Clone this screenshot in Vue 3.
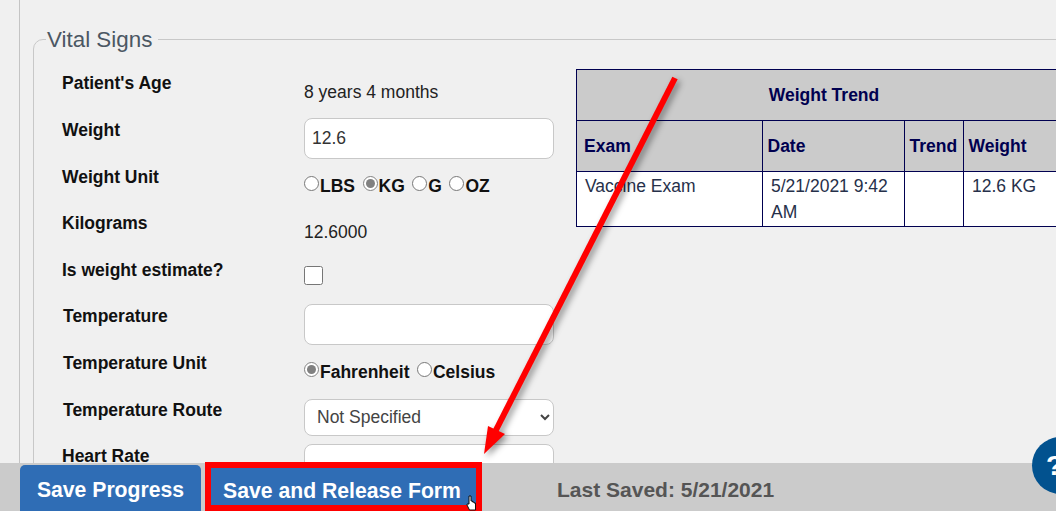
<script setup>
const rows = [
  { label: "Patient's Age", kind: 'text', value: '8 years 4 months' },
  { label: 'Weight', kind: 'input', value: '12.6' },
  { label: 'Weight Unit', kind: 'radio', name: 'unit', options: [['LBS', false], ['KG', true], ['G', false], ['OZ', false]] },
  { label: 'Kilograms', kind: 'text', value: '12.6000' },
  { label: 'Is weight estimate?', kind: 'check' },
  { label: 'Temperature', kind: 'input', value: '', nudge: true },
  { label: 'Temperature Unit', kind: 'radio', name: 'tunit', nudge: true, options: [['Fahrenheit', true], ['Celsius', false]] },
  { label: 'Temperature Route', kind: 'select', value: 'Not Specified', nudge: true },
  { label: 'Heart Rate', kind: 'input', value: '' },
]
</script>

<template>
  <div class="page">
    <main class="content">
      <div class="panel">
        <fieldset class="vitals">
          <legend>Vital Signs</legend>
          <div class="columns">
            <div class="form-grid">
              <div v-for="row in rows" :key="row.label" class="row">
                <label class="row-label" :class="{ nudge: row.nudge }">{{ row.label }}</label>
                <div class="row-value">
                  <span v-if="row.kind === 'text'" class="plain">{{ row.value }}</span>
                  <input v-else-if="row.kind === 'input'" class="field" type="text" :value="row.value" />
                  <div v-else-if="row.kind === 'radio'" class="radios">
                    <label v-for="opt in row.options" :key="opt[0]" class="radio">
                      <input type="radio" :name="row.name" :checked="opt[1]" />{{ opt[0] }}
                    </label>
                  </div>
                  <input v-else-if="row.kind === 'check'" class="check" type="checkbox" />
                  <select v-else class="field picker">
                    <option>{{ row.value }}</option>
                  </select>
                </div>
              </div>
            </div>

            <table class="trend">
              <colgroup>
                <col class="c-exam" />
                <col class="c-date" />
                <col class="c-trend" />
                <col />
              </colgroup>
              <thead>
                <tr class="title"><th colspan="4">Weight Trend</th></tr>
                <tr class="heads">
                  <th class="h-exam">Exam</th>
                  <th>Date</th>
                  <th>Trend</th>
                  <th>Weight</th>
                </tr>
              </thead>
              <tbody>
                <tr>
                  <td>Vaccine Exam</td>
                  <td>5/21/2021 9:42 AM</td>
                  <td></td>
                  <td>12.6 KG</td>
                </tr>
              </tbody>
            </table>
          </div>
        </fieldset>
      </div>
    </main>

    <footer class="bar">
      <button class="save first">Save Progress</button>
      <button class="save release">Save and Release Form</button>
      <span class="saved">Last Saved: 5/21/2021</span>
    </footer>

    <button class="help">?</button>

    <!-- annotation drawn over the screenshot -->
    <svg class="arrow" width="1056" height="511" viewBox="0 0 1056 511">
      <path d="M675 78 L495 432" stroke="#ff0000" stroke-width="6" fill="none" />
      <path d="M484 454 L488 426 L505 434 Z" fill="#ff0000" />
    </svg>

    <svg class="pointer" width="11" height="16" viewBox="0 0 11 16">
      <path d="M3 1 h2 v5 h1.5 v1 h1.5 v1 h1.5 v7 h-6 l-2.5 -5 v-1 h2 z" fill="#fff" stroke="#111" stroke-width="1" />
    </svg>
  </div>
</template>

<style>
html,
body {
  margin: 0;
  background: #f0f0f0;
}
</style>

<style scoped>
.page {
  position: relative;
  display: flex;
  flex-direction: column;
  width: 1056px;
  height: 511px;
  overflow: hidden;
  font-family: "Liberation Sans", Arial, sans-serif;
  color: #222;
}

.content {
  flex: 1;
  min-height: 0;
  overflow: hidden;
  padding-left: 19px;
}

.panel {
  border-left: 1px solid #c4c4c4;
  padding: 25px 0 0 13px;
  height: 100%;
  box-sizing: border-box;
}

.vitals {
  margin: 0 -60px 0 0;
  padding: 18.3px 0 0 28px;
  border: 1px solid #c8c8c8;
  border-radius: 10px;
  min-width: 0;
}

.vitals legend {
  margin-left: -16px;
  padding: 2px 6px 0 1px;
  font-size: 22.4px;
  line-height: 26px;
  color: #4b5763;
}

.columns {
  display: flex;
  align-items: flex-start;
}

.form-grid {
  width: 492px;
  flex: none;
  display: grid;
  grid-auto-rows: 46.62px;
}

.row {
  display: grid;
  grid-template-columns: 242px 250px;
}

.row-label {
  font-size: 17.5px;
  font-weight: bold;
  line-height: 20px;
  padding-top: 2px;
  color: #111;
}

.row-label.nudge {
  margin-left: 1px;
}

.row-value {
  min-height: 0;
}

.plain {
  display: block;
  font-size: 17.5px;
  line-height: 20px;
  padding-top: 11px;
  color: #222;
}

.field {
  display: block;
  width: 250px;
  height: 41px;
  box-sizing: border-box;
  border: 1px solid #c8c8c8;
  border-radius: 8px;
  background: #fff;
  padding: 0 7px;
  font-family: inherit;
  font-size: 17.5px;
  color: #333;
}

.picker {
  height: 37px;
  margin-top: 1px;
  padding: 0 8px;
  color: #444;
}

.radios {
  display: flex;
  gap: 7.5px;
  padding-top: 11px;
}

.radio {
  display: flex;
  align-items: center;
  font-size: 17.5px;
  font-weight: bold;
  line-height: 20px;
  color: #111;
}

.radio input {
  width: 15px;
  height: 15px;
  margin: -4px 1px 0 0;
  accent-color: #808080;
}

.check {
  display: block;
  width: 19px;
  height: 19px;
  margin: 8.5px 0 0 0;
  accent-color: #808080;
}

.trend {
  flex: none;
  width: 496px;
  margin: -2.3px 0 0 22px;
  table-layout: fixed;
  border-collapse: collapse;
  color: #000050;
  font-size: 17.5px;
}

.c-exam {
  width: 186px;
}

.c-date {
  width: 142px;
}

.c-trend {
  width: 59px;
}

.trend th,
.trend td {
  border: 1px solid #000050;
}

.trend th {
  background: #cbcbcb;
  font-weight: bold;
  text-align: left;
  height: 50px;
  padding: 0 4.5px;
}

.trend .h-exam {
  padding-left: 7px;
}

.title th {
  text-align: center;
}

.trend td {
  background: #fff;
  vertical-align: top;
  height: 52px;
  padding: 1px 8px;
  line-height: 26px;
  color: #26304a;
}

.bar {
  position: relative;
  flex: none;
  height: 48px;
  background: #cbcbcb;
  display: flex;
  align-items: flex-end;
  padding-left: 20px;
}

.save {
  border: none;
  background: #2f6db5;
  color: #fff;
  font-family: inherit;
  font-size: 21.2px;
  font-weight: bold;
  padding: 0;
}

.first {
  width: 181px;
  height: 46px;
  padding-top: 4px;
  border-radius: 5px 5px 0 0;
}

.release {
  width: 277px;
  height: 49px;
  margin-left: 4px;
  padding: 8px 3px 0 0;
  border: 6px solid #ff0000;
}

.saved {
  margin-left: 75px;
  margin-top: 5px;
  align-self: center;
  font-size: 21px;
  font-weight: bold;
  color: #555;
}

.help {
  position: absolute;
  left: 1032px;
  top: 437px;
  width: 57px;
  height: 57px;
  border: none;
  border-radius: 50%;
  background: #02528f;
  color: #fff;
  font-family: inherit;
  font-size: 28px;
  font-weight: bold;
  padding: 0;
  text-align: left;
  text-indent: 14px;
}

.arrow {
  position: absolute;
  left: 0;
  top: 0;
  pointer-events: none;
  filter: drop-shadow(3px 3px 3px rgba(0, 0, 0, 0.4));
}

.pointer {
  position: absolute;
  left: 466px;
  top: 495px;
}
</style>
